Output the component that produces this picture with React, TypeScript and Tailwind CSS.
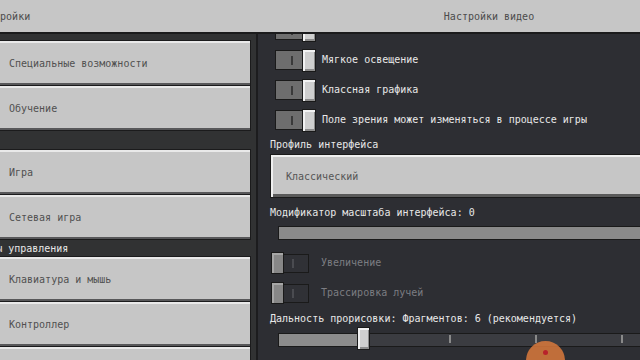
import React from "react";

function NavButton({ label }: { label: string }) {
  return (
    <div className="w-[251px] border-t border-r border-[#1b1b1c]">
      <div className="flex h-[44px] items-center border-t-2 border-b-2 border-t-[#e9e9e9] border-b-[#58585a] bg-[#c6c6c6] pl-[9px] text-[#505050]">
        {label}
      </div>
    </div>
  );
}

function NavGroup({ items }: { items: string[] }) {
  return (
    <div className="w-[251px] border-b border-[#1b1b1c]">
      {items.map((item, i) => (
        <NavButton key={i} label={item} />
      ))}
    </div>
  );
}

function ToggleOn({ label, className = "" }: { label: string; className?: string }) {
  return (
    <div className={"flex h-[22px] items-center " + className}>
      <div className="ml-[17px] flex items-center">
        <div className="flex h-[20px] w-[28px] items-center border border-[#1a1a1a] bg-[#6e6e6e] pl-[15px]">
          <div className="h-[9px] w-[2px] bg-[#3a3a3a]" />
        </div>
        <div className="-ml-[1px] h-[23px] w-[14px] border border-[#1a1a1a] bg-[#cfcfcf] shadow-[inset_2px_2px_0_#f2f2f2,inset_-1px_-2px_0_#8c8c8c]" />
      </div>
      <span className="ml-[6px] leading-[12px] text-[#e8e8e8]">{label}</span>
    </div>
  );
}

function ToggleOff({ label, className = "" }: { label: string; className?: string }) {
  return (
    <div className={"flex h-[22px] items-center " + className}>
      <div className="ml-[13px] flex items-center">
        <div className="relative z-10 h-[22px] w-[13px] border border-[#1a1a1a] bg-[#878787] shadow-[inset_2px_2px_0_#a6a6a6]" />
        <div className="-ml-[1px] flex h-[19px] w-[26px] items-center border border-[#1a1a1a] bg-[#303136] pl-[8px]">
          <div className="h-[9px] w-[2px] bg-[#4a4b50]" />
        </div>
      </div>
      <span className="ml-[12px] leading-[12px] text-[#7c7d82]">{label}</span>
    </div>
  );
}

export default function App() {
  return (
    <div className="relative flex h-[360px] w-[640px] flex-col overflow-hidden bg-[#313233] font-['DejaVu_Sans_Mono',monospace] text-[10px]">
      {/* header */}
      <div className="flex h-[34px] shrink-0 border-b-2 border-[#1b1b1c] bg-[#c6c6c6] pt-[1px] text-[#4c4c4c]">
        <div className="flex w-[258px] shrink-0 items-center overflow-hidden">
          <span className="-ml-[24px] whitespace-nowrap leading-[12px]">Настройки</span>
        </div>
        <div className="flex w-[462px] shrink-0 items-center justify-center">
          <span className="leading-[12px]">Настройки видео</span>
        </div>
      </div>

      <div className="flex min-h-0 flex-1">
        {/* left column */}
        <div className="w-[258px] shrink-0 overflow-hidden border-r-2 border-[#1c1c1e] bg-[#313233]">
          <div className="mt-[6px]">
            <NavGroup items={["Специальные возможности", "Обучение"]} />
          </div>
          <div className="mt-[18px]">
            <NavGroup items={["Игра", "Сетевая игра"]} />
          </div>
          <div className="h-[16px] overflow-hidden pt-[3px] leading-[12px] text-[#e8e8e8]">
            <span className="-ml-[46px] whitespace-nowrap">Элементы управления</span>
          </div>
          <NavGroup items={["Клавиатура и мышь", "Контроллер", ""]} />
        </div>

        {/* right column */}
        <div className="w-[462px] shrink-0 overflow-hidden bg-[#2d2e33]">
          <div className="-mt-[15px] flex flex-col">
            <ToggleOn label="" />
            <ToggleOn label="Мягкое освещение" className="mt-[8px]" />
            <ToggleOn label="Классная графика" className="mt-[8px]" />
            <ToggleOn label="Поле зрения может изменяться в процессе игры" className="mt-[8px]" />

            <div className="mt-[8px] ml-[12px] leading-[12px] text-[#e8e8e8]">Профиль интерфейса</div>
            <div className="mt-[3px] ml-[12px] mr-[12px] flex h-[44px] items-center border border-[#1a1a1a] bg-[#c6c6c6] pl-[15px] text-[#555555] shadow-[inset_2px_2px_0_#efefef,inset_0_-3px_0_#5a5a5a]">
              Классический
            </div>

            <div className="mt-[9px] ml-[12px] leading-[12px] text-[#e8e8e8]">Модификатор масштаба интерфейса: 0</div>
            <div className="mt-[7px] ml-[20px] mr-[12px] h-[14px] border border-[#1a1a1a] bg-[#8a8a8a]" />

            <ToggleOff label="Увеличение" className="mt-[12px]" />
            <ToggleOff label="Трассировка лучей" className="mt-[8px]" />

            <div className="mt-[9px] ml-[12px] leading-[12px] text-[#e8e8e8]">
              Дальность прорисовки: Фрагментов: 6 (рекомендуется)
            </div>
            <div className="relative mt-[2px] ml-[20px] mr-[12px] h-[23px]">
              <div className="mt-[6px] flex h-[14px] border border-[#1a1a1a] bg-[#3b3c41]">
                <div className="h-full w-[80px] bg-[#8c8c8c]" />
              </div>
              <div className="absolute top-[8px] left-[171px] h-[8px] w-[2px] bg-[#8a8a8a]" />
              <div className="absolute top-[8px] left-[257px] h-[8px] w-[2px] bg-[#8a8a8a]" />
              <div className="absolute top-[8px] left-[343px] h-[8px] w-[2px] bg-[#8a8a8a]" />
              <div className="absolute top-0 left-[79px] h-[23px] w-[13px] border border-[#1a1a1a] bg-[#cfcfcf] shadow-[inset_2px_2px_0_#f2f2f2,inset_-1px_-2px_0_#8c8c8c]" />
            </div>
          </div>
        </div>
      </div>

      {/* touch indicator */}
      <div className="absolute top-[341px] left-[526px] flex h-[39px] w-[39px] items-start justify-center rounded-full bg-[#db793c]/85 pt-[9px]">
        <div className="h-[5px] w-[5px] rounded-full bg-[#b8222b]" />
      </div>
    </div>
  );
}
